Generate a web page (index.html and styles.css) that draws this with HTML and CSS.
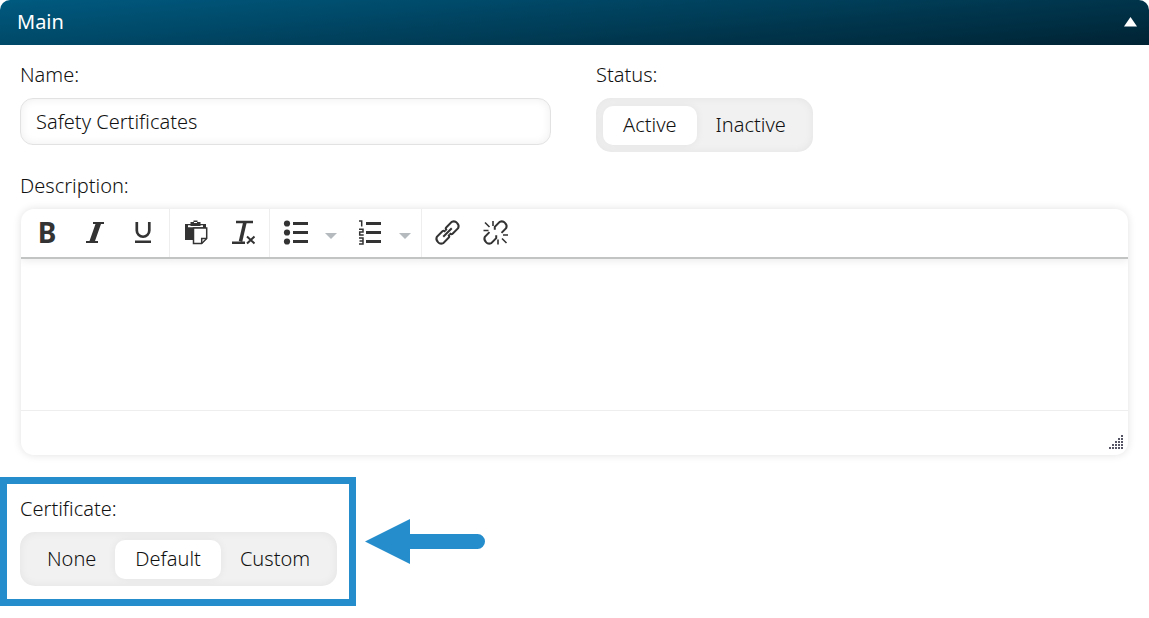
FILE: index.html
```html
<!DOCTYPE html>
<html lang="en">
<head>
    <meta charset="UTF-8">
    <meta name="viewport" content="width=device-width, initial-scale=1.0">
    <title>Safety Certificates</title>
    <link rel="stylesheet" href="styles.css">
</head>
<body>
    <header class="panel-header">
        <h1>Main</h1>
        <button type="button" class="collapse" aria-label="Collapse section">
            <svg width="13" height="10" viewBox="0 0 13 10"><path d="M6.5 0L13 9.500H0z" fill="#fff"/></svg>
        </button>
    </header>

    <form class="panel">
        <div class="row">
            <div class="field">
                <label class="title" for="name">Name:</label>
                <input type="text" id="name" class="text-input" value="Safety Certificates">
            </div>
            <div class="field" role="radiogroup" aria-labelledby="status-title">
                <span class="title" id="status-title">Status:</span>
                <div class="toggle">
                    <input type="radio" name="status" id="active" checked>
                    <label for="active">Active</label>
                    <input type="radio" name="status" id="inactive">
                    <label for="inactive">Inactive</label>
                </div>
            </div>
        </div>

        <div class="description">
            <label class="title" for="description">Description:</label>
            <div class="editor">
                <div class="toolbar">
                    <div class="group">
                        <button type="button" class="tool bold" aria-label="Bold">B</button>
                        <button type="button" class="tool" aria-label="Italic">
                            <svg class="icon" viewBox="0 0 28 28"><path d="M11 3h11v2h-3l-6 17h3v2H4v-2h3.500l6-17H11z"/></svg>
                        </button>
                        <button type="button" class="tool" aria-label="Underline">
                            <svg class="icon" viewBox="0 0 28 28"><path d="M6.800 3v8.500a6.200 6.200 0 0 0 12.500 0V3" fill="none" stroke="#333" stroke-width="2.700"/><path d="M5 21.500h16V24H5z"/></svg>
                        </button>
                    </div>
                    <div class="group">
                        <button type="button" class="tool" aria-label="Paste">
                            <svg class="icon" viewBox="0 0 28 28"><path d="M3 5h5.500V3h3V1.500h4V3h3v2H24v5H12v11H3z"/><path d="M6 6.200h15v2H6z" fill="#fff"/><path d="M8.500 5h10v2h-10z"/><path d="M12 3.500h3" stroke="#fff"/><path d="M11.500 9h13.200v10.500l-5 5h-8.200z" fill="#fff" stroke="#333" stroke-width="1.500"/><path d="M24.700 19.500h-5v5" fill="none" stroke="#333" stroke-width="1.500"/></svg>
                        </button>
                        <button type="button" class="tool" aria-label="Remove format">
                            <svg class="icon" viewBox="0 0 28 28"><path d="M6 3h17" fill="none" stroke="#333" stroke-width="2.500"/><path d="M15 3l-4.500 19.500" fill="none" stroke="#333" stroke-width="3.500"/><path d="M2 22.500h13V25H2z"/><path d="M17 17.500l7.500 7M24.500 17.500l-7.500 7" stroke="#333" stroke-width="2"/></svg>
                        </button>
                    </div>
                    <div class="group">
                        <button type="button" class="tool" aria-label="Bullet list">
                            <svg class="icon" viewBox="0 0 28 28"><circle cx="5" cy="4.500" r="3.100"/><circle cx="5" cy="13.500" r="3.100"/><circle cx="5" cy="22.500" r="3.100"/><path d="M11 3h15v3H11zM11 12h15v3H11zM11 21h15v3H11z"/></svg>
                        </button>
                        <button type="button" class="caret" aria-label="Bullet list styles">
                            <svg width="12" height="6" viewBox="0 0 12 6"><path d="M0 0h12L6 6z" fill="#b4babe"/></svg>
                        </button>
                        <button type="button" class="tool" aria-label="Numbered list">
                            <svg class="icon" viewBox="0 0 28 28"><path d="M3 2h2.700v5.500M3 10.200h4V13H3.700v3h4M3 19h4v6H3M3.500 22H7" fill="none" stroke="#333" stroke-width="1.500"/><path d="M10 3h15v3H10zM10 12h15v3H10zM10 21h15v3H10z"/></svg>
                        </button>
                        <button type="button" class="caret" aria-label="Numbered list styles">
                            <svg width="12" height="6" viewBox="0 0 12 6"><path d="M0 0h12L6 6z" fill="#b4babe"/></svg>
                        </button>
                    </div>
                    <div class="group">
                        <button type="button" class="tool" aria-label="Insert link">
                            <svg class="icon" viewBox="0 0 28 28"><g transform="rotate(-45 13.500 13.500)" fill="none" stroke="#333" stroke-width="2"><path d="M12.500 11.500V11a2 2 0 0 0-2-2H3a4.500 4.500 0 0 0-3 4.500A4.500 4.500 0 0 0 3 18h7.500a2 2 0 0 0 2-2v-.5M14.500 11.500V11a2 2 0 0 1 2-2H24a4.500 4.500 0 0 1 3 4.500 4.500 4.500 0 0 1-3 4.500h-7.500a2 2 0 0 1-2-2v-.5M7.500 13.500h12"/></g></svg>
                        </button>
                        <button type="button" class="tool" aria-label="Remove link">
                            <svg class="icon" viewBox="0 0 28 28"><g transform="rotate(-45 13.500 13.500)" fill="none" stroke="#333" stroke-width="2"><path d="M9.500 9H3a4.500 4.500 0 0 0-3 4.500A4.500 4.500 0 0 0 3 18h7l2-2M17.500 18H24a4.500 4.500 0 0 0 3-4.500A4.500 4.500 0 0 0 24 9h-7l-2 2"/></g><path d="M11 2v5M3 3.500L7.500 8M1.500 11.500h5M16 20.500v5M24.500 24L20 19.500M26 16h-5" fill="none" stroke="#333" stroke-width="1.600"/></svg>
                        </button>
                    </div>
                </div>
                <textarea id="description" class="editor-body"></textarea>
                <div class="editor-footer">
                    <svg width="15" height="15" viewBox="0 0 15 15"><path d="M12 1h2M9 4h5M6 7h8M3 10h11M0 13h14" fill="none" stroke="#556" stroke-width="2" stroke-dasharray="2 1"/></svg>
                </div>
            </div>
        </div>

        <div class="certificate">
            <div class="highlight" role="radiogroup" aria-labelledby="certificate-title">
                <span class="title" id="certificate-title">Certificate:</span>
                <div class="toggle">
                    <input type="radio" name="certificate" id="none">
                    <label for="none">None</label>
                    <input type="radio" name="certificate" id="default" checked>
                    <label for="default">Default</label>
                    <input type="radio" name="certificate" id="custom">
                    <label for="custom">Custom</label>
                </div>
            </div>
            <svg class="arrow" width="120" height="45" viewBox="0 0 120 45"><path d="M0 22.500L45 0v15h67.500a7.500 7.500 0 0 1 0 15H45v15z" fill="#258dcc"/></svg>
        </div>
    </form>
</body>
</html>
```

FILE: styles.css
```css
* {
    box-sizing: border-box;
}
body {
    margin: 0;
    background-color: #fff;
    color: #111;
    font-family: "Noto Sans", sans-serif;
    font-size: 20px;
    font-weight: 300;
    line-height: 28px;
}
button, input, textarea {
    font: inherit;
    color: inherit;
}
button {
    padding: 0;
    border: none;
    background: none;
    cursor: pointer;
}
svg {
    display: block;
}
.panel-header {
    display: flex;
    justify-content: space-between;
    align-items: center;
    height: 45px;
    padding: 0 12px 2px 17px;
    border-radius: 10px 10px 0 0;
    background: linear-gradient(175deg, #005a80, #002333);
    color: #fff;
}
.panel-header h1 {
    margin: 0;
    font-size: 20px;
    font-weight: 400;
}
.panel {
    padding-top: 16px;
}
.row {
    display: grid;
    grid-template-columns: 1fr 1fr;
    gap: 45px;
    padding: 0 22px 0 20px;
}
.title {
    display: block;
    margin-bottom: 9px;
}
.text-input {
    display: block;
    width: 100%;
    height: 47px;
    padding: 0 15px;
    border: 1px solid #e2e2e2;
    border-radius: 13px;
    box-shadow: inset 0 0 10px rgba(0, 0, 0, 0.07);
}
.toggle {
    display: inline-flex;
    padding: 8px 7px 7px;
    border-radius: 15px;
    background-color: #f1f1f1;
    box-shadow: inset 0 0 10px rgba(0, 0, 0, 0.06);
    vertical-align: top;
}
.toggle input {
    appearance: none;
    width: 0;
    height: 0;
    margin: 0;
}
.toggle label {
    padding: 0 20px 2px;
    border-radius: 10px;
    line-height: 37px;
    cursor: pointer;
}
.toggle label + input + label {
    margin-left: -1px;
}
.toggle input:checked + label {
    background-color: #fff;
    box-shadow: 0 0 8px rgba(0, 0, 0, 0.06);
}
.description {
    padding: 20px 21px 22px;
}
.description .title {
    margin-left: -1px;
}
.editor {
    overflow: hidden;
    border-radius: 13px;
    box-shadow: 0 0 9px rgba(0, 0, 0, 0.12);
}
.toolbar {
    display: flex;
    padding-left: 1px;
    border-bottom: 2px solid #c2c4c4;
    box-shadow: 0 2px 8px rgba(0, 0, 0, 0.08);
}
.group {
    display: flex;
    height: 48px;
    padding: 0 1px 0 2px;
    border-right: 1px solid #eee;
}
.group:last-child {
    border-right: none;
}
.tool {
    display: flex;
    justify-content: center;
    align-items: center;
    width: 48px;
}
.bold {
    padding: 0 2px 2px 0;
    color: #333;
    font-size: 28px;
    font-weight: 700;
    line-height: 40px;
}
.icon {
    width: 28px;
    height: 28px;
    fill: #333;
}
.caret {
    display: flex;
    align-items: center;
    width: 26px;
    padding: 6px 0 0 5px;
}
.editor-body {
    display: block;
    width: 100%;
    height: 151px;
    padding: 10px 15px;
    border: none;
    outline: none;
    resize: none;
    background: none;
}
.editor-footer {
    display: flex;
    justify-content: flex-end;
    align-items: flex-end;
    height: 45px;
    padding: 5px 4px;
    border-top: 1px solid #eee;
}
.certificate {
    display: flex;
    align-items: center;
    gap: 9px;
}
.highlight {
    padding: 11px 12px 13px 13px;
    border: 7px solid #258dcc;
}
```
